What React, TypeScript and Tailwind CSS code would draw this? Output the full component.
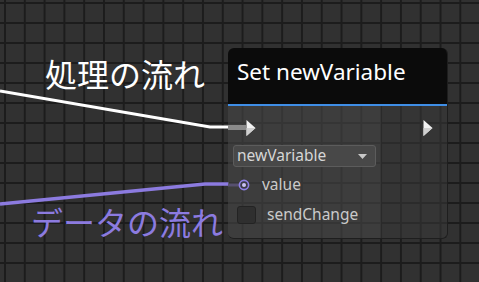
import * as React from 'react';

const ui = { fontFamily: '"Noto Sans", "Open Sans", sans-serif' };
const jp = { fontFamily: '"Noto Sans CJK JP", "Noto Sans", sans-serif' };

function ExecArrow() {
  return (
    <svg width="10" height="18" viewBox="0 0 10 18">
      <polygon points="0.5,1 9.5,9 0.5,17" fill="#f2f2f2" />
      <polygon points="0.5,9 9.5,9 0.5,17" fill="#cfcfcf" />
    </svg>
  );
}

export default function App() {
  return (
    <div className="relative w-[479px] h-[282px] overflow-hidden bg-[#313131] bg-[linear-gradient(to_right,#1c1c1c_2px,transparent_2px),linear-gradient(to_bottom,#1c1c1c_2px,transparent_2px)] bg-[length:19.8px_20px] bg-[position:4px_2px]">
      {/* wires */}
      <svg className="absolute inset-0" width="479" height="282">
        <polyline points="0,91 210,127 229,127" fill="none" stroke="#ffffff" strokeWidth="3" />
        <polyline points="0,204 205,184 229,184" fill="none" stroke="#8c7be0" strokeWidth="3.5" />
      </svg>

      <div className="absolute left-[45px] top-[57px] text-[32px] leading-none text-white" style={jp}>
        処理の流れ
      </div>
      <div className="absolute left-[31px] top-[205px] text-[32px] leading-none text-[#8c7be0]" style={jp}>
        データの流れ
      </div>

      {/* node */}
      <div
        className="absolute left-[228px] top-[48px] w-[220px] h-[191px] flex flex-col rounded-[6px] overflow-hidden border-r border-b border-[#1e1e1e]"
        style={ui}
      >
        <div className="h-[56px] shrink-0 bg-[#0b0b0b] pl-[9px] pt-[13px] text-[22.5px] leading-none text-white">
          Set newVariable
        </div>
        <div className="h-[2px] shrink-0 bg-[#3f8ee6]" />
        <div className="flex flex-1">
          <div className="w-[154px] flex flex-col pt-[11px] bg-[rgba(70,70,70,0.62)] border-r border-[#2a2a2a]">
            <div className="h-[21px] flex items-center">
              <div className="w-[18px] h-[5px] bg-[#8a8a8a]" />
              <ExecArrow />
            </div>
            <div className="px-[5px] mt-[7px]">
              <div className="h-[22px] flex items-center justify-between pl-[3px] pr-[8px] rounded-[3px] bg-[#484848] border border-[#5c5c5c] text-[15.5px] leading-none text-[#d6d6d6]">
                <span>newVariable</span>
                <svg width="9" height="5" viewBox="0 0 9 5">
                  <polygon points="0,0 9,0 4.5,5" fill="#c8c8c8" />
                </svg>
              </div>
            </div>
            <div className="h-[20px] mt-[8px] flex items-center">
              <svg width="22" height="14" viewBox="0 0 22 14">
                <rect x="0" y="5.5" width="11" height="3" fill="#57506f" />
                <circle cx="16" cy="7" r="4.6" fill="#3b3a45" stroke="#8f80e6" strokeWidth="1.6" />
                <circle cx="16" cy="7" r="2" fill="#c9c0f5" />
              </svg>
              <span className="ml-[12px] text-[15.5px] leading-none text-[#cacaca]">value</span>
            </div>
            <div className="h-[20px] mt-[10px] pl-[9px] flex items-center">
              <div className="w-[19px] h-[18px] rounded-[3px] bg-[#2f2f2f] border border-[#232323]" />
              <span className="ml-[11px] text-[15.5px] leading-none text-[#cacaca]">sendChange</span>
            </div>
          </div>
          <div className="flex-1 pt-[11px] bg-[rgba(58,58,58,0.5)]">
            <div className="h-[21px] flex items-center pl-[41px]">
              <ExecArrow />
            </div>
          </div>
        </div>
      </div>
    </div>
  );
}
